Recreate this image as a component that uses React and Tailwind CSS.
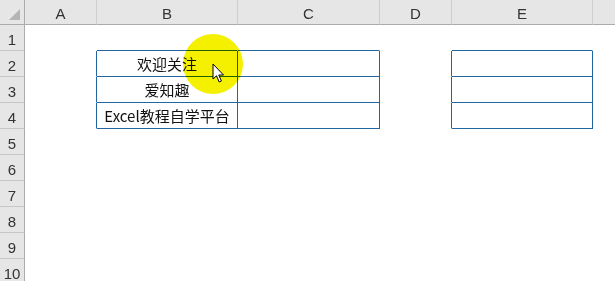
import React from "react";

const COLS = [
  { key: "A", w: "w-[72px]" },
  { key: "B", w: "w-[141px]" },
  { key: "C", w: "w-[142px]" },
  { key: "D", w: "w-[72px]" },
  { key: "E", w: "w-[141px]" },
  { key: "", w: "w-[22px]" },
];

const TEXT = {
  "B2": "欢迎关注",
  "B3": "爱知趣",
  "B4": "Excel教程自学平台",
};

const ROWS = [1, 2, 3, 4, 5, 6, 7, 8, 9, 10];

// which cell edges belong to the two bordered tables (B2:C4 and E2:E4)
const blueBottom = (row, col) => row >= 1 && row <= 4 && ["B", "C", "E"].includes(col);
const blueRight = (row, col) => row >= 2 && row <= 4 && ["A", "B", "C", "D", "E"].includes(col);

const Cursor = () => (
  <svg width="14" height="21" viewBox="0 0 14 21" className="absolute left-[212px] top-[63px]">
    <path
      d="M1 1 L1 16 L4.5 12.8 L7.2 19 L9.4 18 L6.8 12 L11.5 12 Z"
      fill="white"
      stroke="black"
      strokeWidth="1"
      strokeLinejoin="miter"
    />
  </svg>
);

const App = () => {
  return (
    <div
      className="relative w-[615px] h-[281px] overflow-hidden bg-white"
      style={{ fontFamily: "'Liberation Sans', Arial, sans-serif" }}
    >
      {/* column header */}
      <div className="flex h-[25px]">
        <div className="relative w-[25px] h-[25px] bg-[#e6e6e6] border-r border-b border-r-[#ababab] border-b-[#ababab]">
          <svg width="12" height="12" viewBox="0 0 12 12" className="absolute left-[9px] top-[9px]">
            <polygon points="11,0 11,11 0,11" fill="#b4b4b4" />
          </svg>
        </div>
        {COLS.map((c, i) => (
          <div
            key={i}
            className={`${c.w} h-[25px] bg-[#e6e6e6] border-b border-b-[#ababab] ${
              c.key ? "border-r border-r-[#cfcfcf]" : ""
            } flex items-end justify-center pb-[3px] text-[15px] leading-none text-[#333]`}
          >
            {c.key}
          </div>
        ))}
      </div>

      {ROWS.map((r) => (
        <div key={r} className="flex h-[26px]">
          <div className="w-[25px] h-[26px] bg-[#e6e6e6] border-r border-b border-r-[#ababab] border-b-[#c6c6c6] flex items-end justify-center pb-[3px] text-[15px] leading-none text-[#333]">
            {r}
          </div>
          {COLS.map((c, i) => {
            const key = `${c.key}${r}`;
            const br = blueRight(r, c.key) ? "border-r-[#2266a1]" : "border-r-white";
            const bb = blueBottom(r, c.key) ? "border-b-[#2266a1]" : "border-b-white";
            return (
              <div
                key={i}
                className={`${c.w} h-[26px] border-r border-b ${br} ${bb} flex items-center justify-center text-[15px] leading-none text-[#111]`}
                style={{ fontFamily: "'Noto Sans CJK SC', 'Liberation Sans', sans-serif" }}
              >
                {TEXT[key] || ""}
              </div>
            );
          })}
        </div>
      ))}

      {/* click highlight and mouse pointer */}
      <div className="absolute left-[183px] top-[34px] w-[60px] h-[60px] rounded-full bg-[#f5f000] mix-blend-multiply" />
      <Cursor />
    </div>
  );
};

export default App;
